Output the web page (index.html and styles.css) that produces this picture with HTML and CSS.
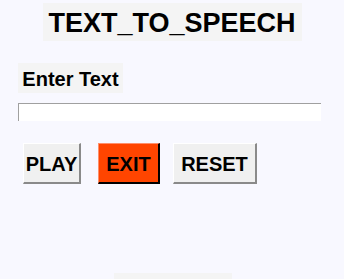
FILE: index.html
```html
<!DOCTYPE html>
<html>
<head>
<meta charset="utf-8">
<link rel="stylesheet" href="styles.css">
</head>
<body>
<div class="app">
  <div class="title">TEXT_TO_SPEECH</div>
  <div class="label">Enter Text</div>
  <input class="entry" type="text">
  <div class="buttons">
    <button class="btn play">PLAY</button>
    <button class="btn exit">EXIT</button>
    <button class="btn reset">RESET</button>
  </div>
  <div class="status"></div>
</div>
</body>
</html>
```

FILE: styles.css
```css
html, body {
  margin: 0;
  padding: 0;
  background: #f8f8ff;
}
.app {
  display: flex;
  flex-direction: column;
  font-family: "Liberation Sans", Arial, sans-serif;
  font-weight: bold;
  color: #000;
}
.title {
  align-self: center;
  margin-top: 3px;
  width: 259px;
  height: 38px;
  background: #f4f4f4;
  font-size: 27px;
  display: flex;
  align-items: center;
  justify-content: center;
  line-height: 1;
  padding-top: 2px;
  box-sizing: border-box;
}
.label {
  margin: 22px 0 0 18px;
  width: 105px;
  height: 30px;
  background: #f4f4f4;
  font-size: 20px;
  display: flex;
  align-items: center;
  justify-content: center;
  line-height: 1;
  padding-top: 2px;
  box-sizing: border-box;
}
.entry {
  margin: 10px 0 0 18px;
  width: 303px;
  height: 18px;
  box-sizing: border-box;
  border: 0;
  border-top: 1px solid #a0a0a0;
  border-left: 1px solid #a0a0a0;
  background: #fff;
  padding: 0;
  outline: none;
}
.buttons {
  display: flex;
  margin: 22px 0 0 23px;
}
.btn {
  height: 41px;
  box-sizing: border-box;
  font-family: "Liberation Sans", Arial, sans-serif;
  font-weight: bold;
  font-size: 20px;
  color: #000;
  background: #f0f0f0;
  border-top: 1px solid #ffffff;
  border-left: 1px solid #ffffff;
  border-right: 2px solid #8a8a8a;
  border-bottom: 2px solid #8a8a8a;
  padding: 2px 0 0 0;
  margin: 0;
  display: flex;
  align-items: center;
  justify-content: center;
  line-height: 1;
}
.play { width: 58px; }
.exit {
  width: 62px;
  margin-left: 17px;
  background: #ff4500;
  border-top-color: #ff8f6b;
  border-left-color: #ff8f6b;
  border-right-color: #000;
  border-bottom-color: #000;
}
.reset {
  width: 84px;
  margin-left: 13px;
}
.status {
  margin: 89px 0 0 114px;
  width: 118px;
  height: 6px;
  background: #f4f4f4;
}
```
